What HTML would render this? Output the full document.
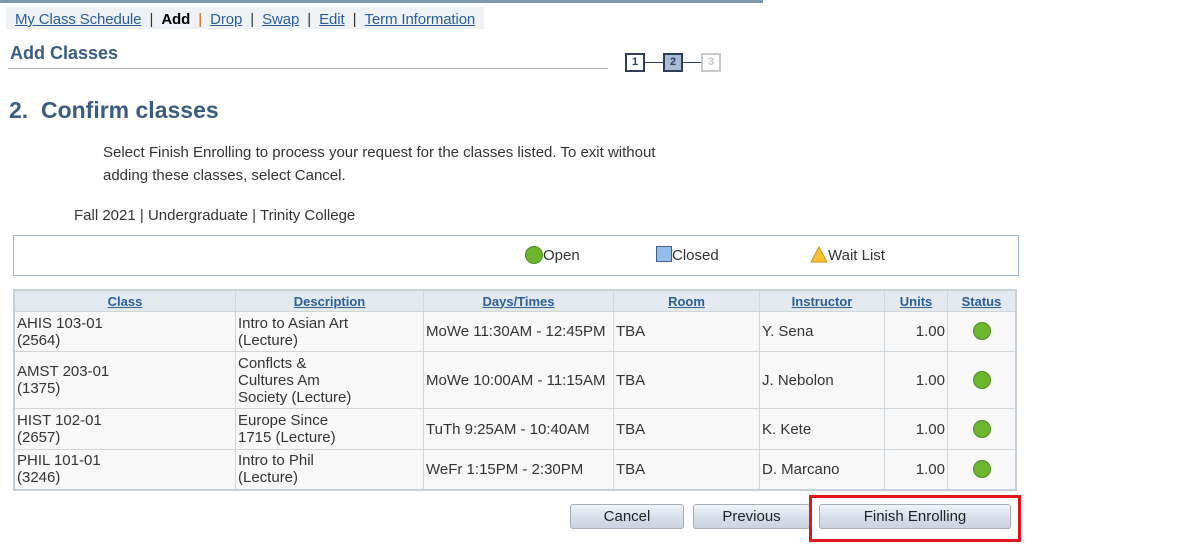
<!DOCTYPE html>
<html><head><meta charset="utf-8"><style>
body{margin:0;width:1179px;height:558px;background:#fff;font-family:"Liberation Sans",Arial,sans-serif;position:relative;overflow:hidden;color:#333}
.a{position:absolute}
a{color:#2b5d98;text-decoration:underline}
table{border-collapse:collapse;font-size:15px;color:#333}
td,th{border:1px solid #cfd6dc;padding:0 2px;vertical-align:middle}
th{background:#e3e9ef;font-size:13px;font-weight:bold;height:20px}
th a{color:#2b5d98}
td{background:#f8f8f8;line-height:17px}
.dot{display:inline-block;width:18px;height:18px;border-radius:50%;background:#6cb52d;border:1px solid #4b8f1e;box-sizing:border-box}
.btn{position:absolute;height:25px;border:1px solid #a5adb6;border-radius:3px;background:linear-gradient(#f2f5f9,#d8e0ea 50%,#c9d3df);font-size:15px;color:#222;text-align:center;line-height:24px;box-sizing:border-box}
.sq{position:absolute;top:53px;width:20px;height:19px;box-sizing:border-box;border:2px solid #2f3d56;font-size:11px;font-weight:bold;text-align:center;line-height:15px;color:#2f3d56}
</style></head><body>
<div class="a" style="left:0;top:0;width:763px;height:3px;background:#7f98b2"></div>
<div class="a" style="left:6px;top:7px;width:478px;height:22px;background:#eef2f4"></div>
<div class="a" style="left:15px;top:11px;font-size:15px;color:#333;white-space:nowrap;letter-spacing:-0.12px"><a>My Class Schedule</a>&nbsp;&nbsp;|&nbsp;&nbsp;<b style="color:#000">Add</b>&nbsp;&nbsp;<span style="color:#c60">|</span>&nbsp;&nbsp;<a>Drop</a>&nbsp;&nbsp;|&nbsp;&nbsp;<a>Swap</a>&nbsp;&nbsp;|&nbsp;&nbsp;<a>Edit</a>&nbsp;&nbsp;|&nbsp;&nbsp;<a>Term Information</a></div>
<div class="a" style="left:10px;top:43px;font-size:18px;font-weight:bold;color:#3c5b82">Add Classes</div>
<div class="a" style="left:8px;top:68px;width:600px;height:1px;background:#aaa"></div>
<div class="sq" style="left:625px;background:#fff">1</div>
<div class="a" style="left:645px;top:62px;width:18px;height:1px;background:#2f3d56"></div>
<div class="sq" style="left:663px;background:#a9bdd6">2</div>
<div class="a" style="left:683px;top:62px;width:18px;height:1px;background:#2f3d56"></div>
<div class="sq" style="left:701px;border-color:#c8c8c8;color:#c8c8c8;background:#fff">3</div>
<div class="a" style="left:9px;top:97px;font-size:23px;font-weight:bold;color:#3c5b82">2.&nbsp; Confirm classes</div>
<div class="a" style="left:103px;top:141px;font-size:15px;line-height:23px;color:#333">Select Finish Enrolling to process your request for the classes listed. To exit without<br>adding these classes, select Cancel.</div>
<div class="a" style="left:74px;top:207px;font-size:15px;color:#333">Fall 2021 | Undergraduate | Trinity College</div>
<div class="a" style="left:13px;top:235px;width:1004px;height:39px;border:1px solid #9fb6cd"></div>
<div class="a" style="left:525px;top:246px;font-size:15px;color:#333"><span class="dot" style="vertical-align:-4px"></span>Open</div>
<div class="a" style="left:656px;top:246px;font-size:15px;color:#333"><span style="display:inline-block;width:14px;height:14px;background:#94bce8;border:1px solid #3f5d8a;vertical-align:-2px"></span>Closed</div>
<div class="a" style="left:810px;top:246px;font-size:15px;color:#333"><svg width="18" height="17" style="vertical-align:-3px"><polygon points="9,1 17,16 1,16" fill="#f7c22e" stroke="#c8941a"/></svg>Wait List</div>
<table class="a" style="left:13px;top:289px;width:1004px;border:2px solid #c5d0da">
<tr><th style="width:216px"><a>Class</a></th><th style="width:183px"><a>Description</a></th><th style="width:185px"><a>Days/Times</a></th><th style="width:141px"><a>Room</a></th><th style="width:120px"><a>Instructor</a></th><th style="width:58px"><a>Units</a></th><th><a>Status</a></th></tr>
<tr style="height:40px"><td>AHIS 103-01<br>(2564)</td><td>Intro to Asian Art<br>(Lecture)</td><td>MoWe 11:30AM - 12:45PM</td><td>TBA</td><td>Y. Sena</td><td style="text-align:right">1.00</td><td style="text-align:center"><span class="dot" style="margin-top:3px"></span></td></tr>
<tr style="height:57px"><td>AMST 203-01<br>(1375)</td><td>Conflcts &amp;<br>Cultures Am<br>Society (Lecture)</td><td>MoWe 10:00AM - 11:15AM</td><td>TBA</td><td>J. Nebolon</td><td style="text-align:right">1.00</td><td style="text-align:center"><span class="dot" style="margin-top:3px"></span></td></tr>
<tr style="height:41px"><td>HIST 102-01<br>(2657)</td><td>Europe Since<br>1715 (Lecture)</td><td>TuTh 9:25AM - 10:40AM</td><td>TBA</td><td>K. Kete</td><td style="text-align:right">1.00</td><td style="text-align:center"><span class="dot" style="margin-top:3px"></span></td></tr>
<tr style="height:40px"><td>PHIL 101-01<br>(3246)</td><td>Intro to Phil<br>(Lecture)</td><td>WeFr 1:15PM - 2:30PM</td><td>TBA</td><td>D. Marcano</td><td style="text-align:right">1.00</td><td style="text-align:center"><span class="dot" style="margin-top:3px"></span></td></tr>
</table>
<div class="btn" style="left:570px;top:504px;width:114px">Cancel</div>
<div class="btn" style="left:693px;top:504px;width:117px">Previous</div>
<div class="btn" style="left:819px;top:504px;width:192px">Finish Enrolling</div>
<div class="a" style="left:809px;top:495px;width:206px;height:41px;border:3px solid #e3141b"></div>
</body></html>
